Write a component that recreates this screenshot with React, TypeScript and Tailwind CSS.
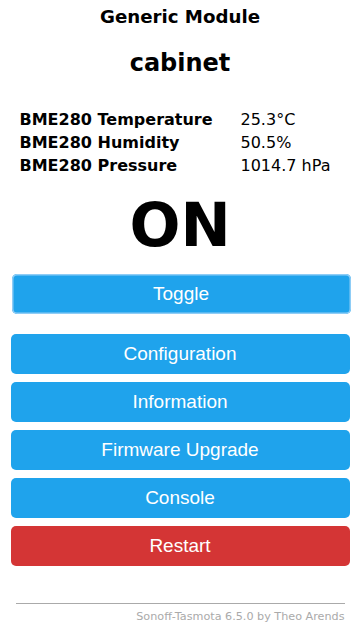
const rows = [
  ["BME280 Temperature", "25.3°C"],
  ["BME280 Humidity", "50.5%"],
  ["BME280 Pressure", "1014.7 hPa"],
];

const menu = ["Configuration", "Information", "Firmware Upgrade", "Console"];

const btn =
  "flex h-[40px] w-full items-center justify-center rounded-[5px] text-[19px] text-white [font-family:'Liberation_Sans',Arial,sans-serif]";

export default function App() {
  return (
    <div className="h-[632px] w-[360px] bg-white text-black [font-family:'DejaVu_Sans',Verdana,sans-serif]">
      <div className="mx-auto flex w-[339px] flex-col pt-[6px]">
        <h3 className="text-center text-[18.2px] font-bold leading-[22px]">Generic Module</h3>
        <h2 className="mt-[20px] text-center text-[24px] font-bold leading-[30px]">cabinet</h2>

        <div className="mt-[30px] flex flex-col pl-[9px]">
          {rows.map(([label, value]) => (
            <div key={label} className="flex h-[23px] items-center text-[16px]">
              <span className="w-[221px] font-bold">{label}</span>
              <span>{value}</span>
            </div>
          ))}
        </div>

        <div className="mt-[17px] text-center text-[60px] font-bold leading-[62px]">ON</div>

        <div className="mt-[18px] flex flex-col">
          <button
            type="button"
            className={`${btn} mx-[1px] w-auto bg-[#1fa3ec] ring-[1.5px] ring-inset ring-[#8fcdf6]`}
          >
            Toggle
          </button>
        </div>

        <div className="mt-[20px] flex flex-col gap-[8px]">
          {menu.map((m) => (
            <button key={m} type="button" className={`${btn} bg-[#1fa3ec]`}>
              {m}
            </button>
          ))}
          <button type="button" className={`${btn} bg-[#d43535]`}>
            Restart
          </button>
        </div>

        <div className="mx-[5px] mt-[37px] border-t border-[#aaaaaa]" />
        <div className="mr-[5px] mt-[6px] text-right text-[11.2px] leading-[14px] text-[#aaaaaa]">
          Sonoff-Tasmota 6.5.0 by Theo Arends
        </div>
      </div>
    </div>
  );
}
